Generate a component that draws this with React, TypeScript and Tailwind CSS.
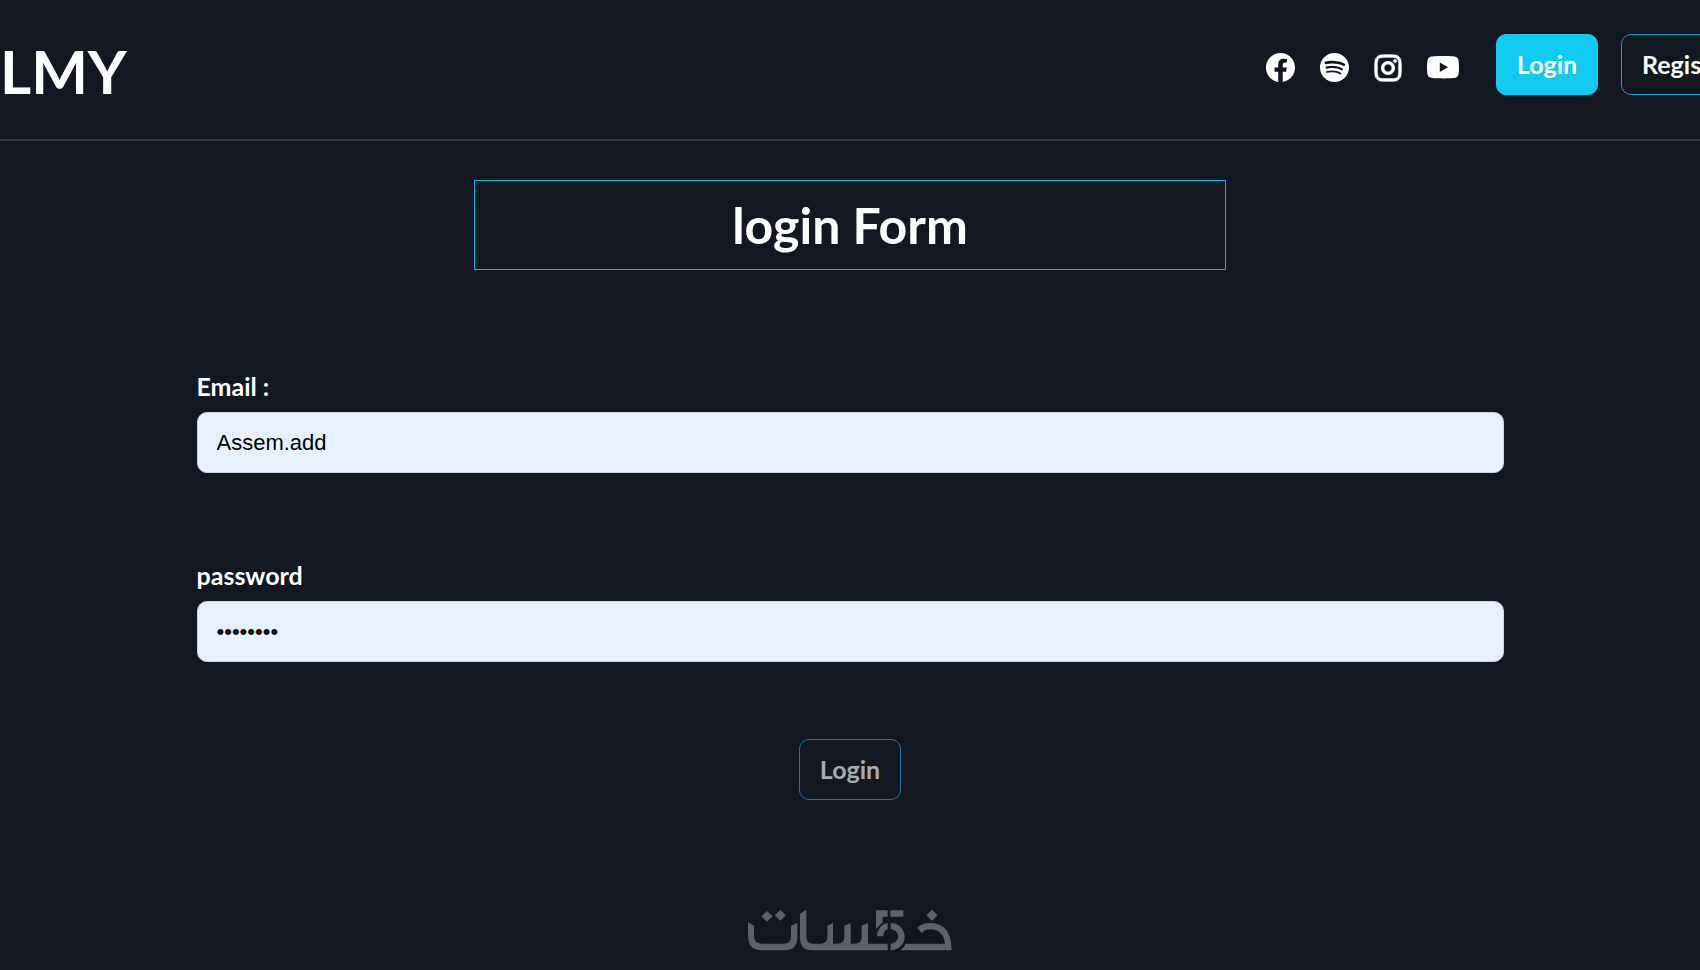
import { useState } from 'react';
import { BsFacebook, BsSpotify, BsYoutube } from 'react-icons/bs';
import { RiInstagramLine } from 'react-icons/ri';

const SOCIALS = [
  { label: 'Facebook', icon: <BsFacebook className="size-[29px]" /> },
  { label: 'Spotify', icon: <BsSpotify className="size-[29px]" /> },
  { label: 'Instagram', icon: <RiInstagramLine className="-mx-0.5 size-8 stroke-[0.5] stroke-white" /> },
  { label: 'YouTube', icon: <BsYoutube className="size-8" /> },
];

const BTN = 'h-[61px] rounded-[10px] border text-[25px] font-bold';
const LABEL = 'mb-2.5 text-[25px] leading-8 font-bold';
const INPUT =
  'h-[61px] w-full rounded-[10px] border border-[#ced4da] bg-[#e6f0ff] px-[19px] font-["Liberation_Sans",Arial,sans-serif] text-[22px] text-black outline-none';

function Header() {
  return (
    <header className="flex h-[141px] items-center justify-between border-b-2 border-[#353942] pb-2.5">
      <a href="#" className="mt-3 text-[60px] leading-none font-bold">
        LMY
      </a>
      <nav className="-mr-[49px] flex shrink-0 items-center">
        <ul className="mt-1.5 mr-[37px] flex items-center gap-[25px]">
          {SOCIALS.map((s) => (
            <li key={s.label}>
              <a href="#" aria-label={s.label}>
                {s.icon}
              </a>
            </li>
          ))}
        </ul>
        <div className="flex gap-[23px]">
          <button className={`${BTN} w-[102px] border-[#12caf0] bg-[#12caf0]`}>Login</button>
          <button className={`${BTN} w-32 border-[#15a3d0] px-5 text-left`}>Register</button>
        </div>
      </nav>
    </header>
  );
}

function LoginForm() {
  const [email, setEmail] = useState('Assem.add');
  const [password, setPassword] = useState('12345678');

  return (
    <form className="mt-[100px] flex w-full max-w-[1307px] flex-col" onSubmit={(e) => e.preventDefault()}>
      <label htmlFor="email" className={LABEL}>
        Email :
      </label>
      <input id="email" type="text" value={email} onChange={(e) => setEmail(e.target.value)} className={INPUT} />
      <label htmlFor="password" className={`${LABEL} mt-[86px]`}>
        password
      </label>
      <input
        id="password"
        type="password"
        value={password}
        onChange={(e) => setPassword(e.target.value)}
        className={INPUT}
      />
      <button className={`${BTN} mt-[77px] w-[102px] self-center border-[#1b79a3] text-[#a9abaf]`}>Login</button>
    </form>
  );
}

function FooterLogo() {
  return (
    <svg viewBox="54 56 612 126" className="mt-[109px] h-[42px] w-[204px] fill-[#5e6168]" role="img" aria-label="خمسات">
      <path d="M111 62l17 16-17 16-17-16zM151 59l17 16-17 16-17-16zM606 58l17 17-17 16-17-16z" />
      <path d="M54 96L72 106V138Q72 160 95 160H163Q183 160 183 138V106L202 98V140Q202 180 165 180H95Q54 180 54 135Z" />
      <path d="M210 70L229 58V138Q229 160 248 160H270Q292 160 292 140V106L309 98V160H322Q343 160 343 140V106L362 98V160H374Q395 160 395 140V106L414 98V160H473V180H245Q210 180 210 140Z" />
      <path d="M438 60H473V79H458V96L438 115ZM481 60H520V79H481Z" />
      <path d="M441 138A36 40 0 0 1 473 98V117A18 21 0 0 0 460 138ZM482 98A42 41 0 0 1 482 180V160A22 21 0 0 0 482 117Z" />
      <path d="M562 112C572 102 585 98 600 98C642 98 665 125 665 180H512Q522 172 527 160H645C642 130 625 117 600 117C590 117 582 120 575 128Z" />
    </svg>
  );
}

export default function App() {
  return (
    <div className="min-h-screen overflow-hidden bg-[#131721] font-[Lato,sans-serif] text-white">
      <Header />
      <main className="flex flex-col items-center px-6 pt-[39px] pb-5">
        <h1 className="flex h-[90px] w-full max-w-[752px] items-center justify-center border border-[#12b5dc] text-[50px] font-bold">
          login Form
        </h1>
        <LoginForm />
        <FooterLogo />
      </main>
    </div>
  );
}
